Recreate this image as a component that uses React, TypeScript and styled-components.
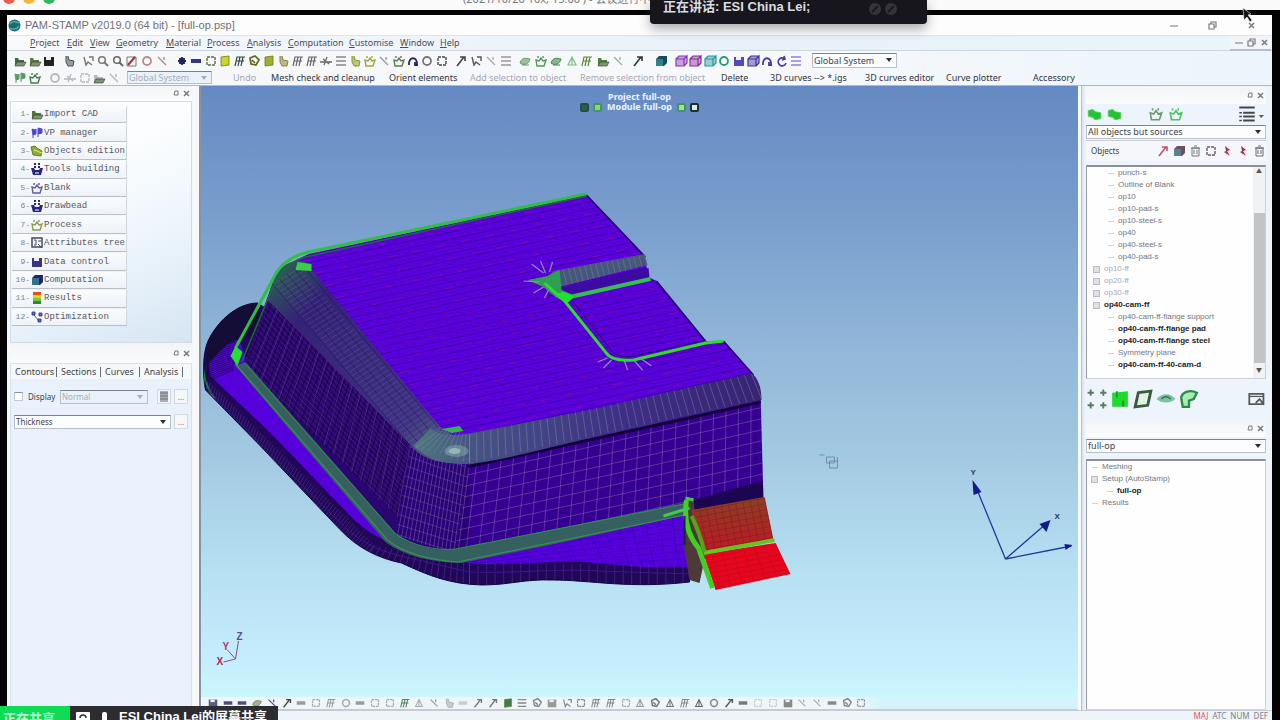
import React from "react";
import styled, { createGlobalStyle } from "styled-components";

const GlobalStyle = createGlobalStyle`
  *, *::before, *::after { box-sizing: border-box; }
  body { margin: 0; background: #000; font-family: "Noto Sans", "Noto Sans CJK SC", sans-serif; font-size: 9px; line-height: 12px; color: #3c3f46; }
  ul, ol { list-style: none; margin: 0; padding: 0; }
  button, select, input { font: inherit; color: inherit; margin: 0; }
`;

/* ---------- frame ---------- */
const Screen = styled.div`
  position: relative; display: flex; flex-direction: column;
  min-height: 100vh; background: #030305; overflow: hidden;
`;
const HostBar = styled.header`
  position: relative; display: flex; height: 10px; flex: none; overflow: hidden;
  background: #fafafa; padding-left: 3px; gap: 8px;
`;
const HostLight = styled.span<{ $c: string }>`
  width: 12px; height: 12px; border-radius: 50%; margin-top: -8px; background: ${(p) => p.$c};
`;
const HostTitle = styled.span`
  margin: -8px 0 0 400px; font-size: 11px; line-height: 14px; color: #77787c; white-space: nowrap;
`;
const AppWindow = styled.div`
  display: flex; flex-direction: column; flex: 1; margin: 5px 8px 0 7px;
  background: #eef5fb;
`;
const TitleBar = styled.div`
  display: flex; align-items: center; height: 20px; padding: 0 14px 0 1px; gap: 4px; background: #fdfdfd;
  font-family: "Liberation Sans", sans-serif; font-size: 11px; color: #6f7178;
`;
const Grow = styled.span`flex: 1;`;
const WindowButtons = styled.div`display: flex; gap: 26px;`;
const GlyphButton = styled.button`
  display: grid; place-items: center; border: 0; padding: 0; background: none; width: 13px; height: 13px; color: #77797f;
`;
const MenuBar = styled.nav`
  display: flex; align-items: center; height: 16px; padding: 0 1px 0 23px; color: #4a4d5a;
  background: linear-gradient(90deg, #f7f9fc, #e6f1f8 60%, #ebf6fb);
  border-bottom: 1px solid #cfd5de; border-top: 1px solid #dde4ee;
`;
const MenuItem = styled.button<{ $w: number }>`
  width: ${(p) => p.$w}px; border: 0; padding: 0; background: none; text-align: left; white-space: nowrap;
  &::first-letter { text-decoration: underline; }
`;
const MdiButtons = styled.div`
  display: flex; align-items: center; height: 15px; padding-left: 2px; border-bottom: 2px solid #b6bcc8; background: #f2f6fa; color: #34363c;
`;
const Toolbar = styled.div`
  display: flex; align-items: center; height: 19px; padding-left: 6px;
  background: linear-gradient(90deg, #f5f7f9, #f7f8fb 60%, #ebf5fb);
`;
const CommandBar = styled(Toolbar)`
  height: 16px; border-bottom: 1px solid #aeb9c9;
`;
const IconGroup = styled.div<{ $w?: number; $ml?: number }>`
  display: flex; align-items: center; justify-content: space-between; flex: none;
  width: ${(p) => (p.$w ? `${p.$w}px` : "auto")}; margin-left: ${(p) => p.$ml ?? 0}px;
`;
const IconButton = styled.button<{ $size?: number }>`
  display: block; flex: none; border: 0; padding: 0; background: none;
  width: ${(p) => p.$size ?? 14}px; height: ${(p) => p.$size ?? 14}px;
  svg { display: block; width: 100%; height: 100%; }
`;
const Command = styled.button<{ $w: number }>`
  width: ${(p) => p.$w}px; flex: none; border: 0; padding: 0; background: none; text-align: left; white-space: nowrap; color: #32353c;
  &:disabled { color: #a4a8af; }
`;
const SelectBox = styled.span<{ $w?: number; $h?: number; $muted?: boolean }>`
  position: relative; display: block; flex: ${(p) => (p.$w ? "none" : "1")};
  width: ${(p) => (p.$w ? `${p.$w}px` : "auto")}; height: ${(p) => p.$h ?? 14}px;
  border: 1px solid #b9bec8; border-top-color: #7e828c; background: ${(p) => (p.$muted ? "#e9f1fa" : "#fcfdfe")};
  color: ${(p) => (p.$muted ? "#8d929c" : "#40434a")};
  &::after {
    content: ""; position: absolute; right: 4px; top: 4px;
    border: 3px solid transparent; border-top: 4px solid ${(p) => (p.$muted ? "#a9aeb6" : "#2a2c31")}; border-bottom: 0; pointer-events: none;
  }
  select {
    display: block; width: 100%; height: 100%; appearance: none; border: 0; padding: 0 10px 0 1px;
    background: none; outline: 0; line-height: 12px;
  }
`;

/* ---------- docks ---------- */
const Body = styled.main`display: flex; flex: 1; min-height: 0;`;
const LeftDock = styled.aside`
  display: flex; flex-direction: column; width: 194px; flex: none; padding: 0 7px 0 3px;
  background: #f6f8fa; border-right: 2px solid #8794a8;
`;
const DockHead = styled.div<{ $h?: number }>`
  display: flex; justify-content: flex-end; align-items: center; gap: 1px; height: ${(p) => p.$h ?? 15}px; flex: none; color: #6a6d76;
  background: linear-gradient(#f2f4f7, #fbfcfd); padding-right: 1px;
  button { width: 9px; height: 9px; }
`;
const StepPanel = styled.section`
  height: 242px; flex: none; padding: 4px 0 0 1px; border: 1px solid #d3dae3;
  background: linear-gradient(155deg, #fbfdfe 30%, #eef6fc 60%, #d6e5f3);
`;
const StepList = styled.ol`
  display: grid; grid-auto-rows: 1fr; width: 115px; height: 221px;
`;
const StepItem = styled.li`display: flex; border-bottom: 1px solid #b9c0cc; border-right: 1px solid #cfd5de; background: linear-gradient(#fafcfe, #eef2f7); margin-bottom: 1px;`;
const StepButton = styled.button`
  display: flex; align-items: center; width: 100%; border: 0; padding: 0; background: none; white-space: nowrap;
  font-family: "Liberation Mono", monospace; color: #555963;
`;
const StepNumber = styled.span`width: 18px; flex: none; text-align: right; font-size: 8px; color: #7d828c;`;
const ContourPanel = styled.section`
  flex: 1; padding: 0 3px; border: 1px solid #dbe1e9; border-bottom: 0; background: #e9f2fc;
`;
const TabRow = styled.div`display: flex; align-items: center; height: 15px; background: #f6f9fc; margin: 0 -3px;`;
const Tab = styled.button<{ $w: number }>`
  width: ${(p) => p.$w}px; margin-right: 4px; border: 0; border-right: 1px solid #666a73; padding: 0; background: none;
  line-height: 10px; text-align: left; white-space: nowrap; &:first-child { margin-left: 4px; }
`;
const FieldRow = styled.div`
  display: flex; align-items: center; gap: 3px; margin-top: 10px; font-size: 8px;
  label { display: flex; align-items: center; gap: 5px; width: 43px; }
  input { appearance: none; width: 9px; height: 9px; border: 1px solid #c3c8d0; border-top-color: #8b8f99; background: #fff; }
`;
const SmallButton = styled.button`
  width: 14px; height: 15px; padding: 0; border: 1px solid #d3d8df; background: #f4f6f9; color: #70747d; font-size: 8px; line-height: 8px;
  svg { display: block; margin: 0 auto; }
`;
const RightDock = styled.aside`
  display: flex; flex-direction: column; width: 194px; flex: none; padding: 0 6px 0 5px;
  border-left: 3px solid #f8fafc; background: linear-gradient(90deg, #dfe6ee 2px, #eef4fb 4px); box-shadow: inset 1px 0 #b6c1ce;
`;
const DockRow = styled.div<{ $h: number }>`display: flex; align-items: center; height: ${(p) => p.$h}px; flex: none;`;
const ObjectsBar = styled(DockRow)`border-top: 1px solid #c9cfd9; background: #f5f7fb; padding-left: 5px; font-size: 8px;`;
const TreeFrame = styled.section<{ $h?: number }>`
  display: flex; flex: ${(p) => (p.$h ? "none" : "1")}; height: ${(p) => (p.$h ? `${p.$h}px` : "auto")};
  border: 1px solid #cdd2da; border-top: 2px solid #8c909a; border-left-color: #969ba5; background: #fefefe;
`;
const Tree = styled.ul<{ $h: number }>`
  display: grid; grid-auto-rows: 1fr; flex: 1; height: ${(p) => p.$h}px;
  font-family: "Liberation Sans", sans-serif; font-size: 8px;
`;
const TreeItem = styled.li<{ $x: number; $bold?: boolean; $dim?: boolean }>`
  display: flex; align-items: center; gap: 4px; padding-left: ${(p) => p.$x}px; white-space: nowrap;
  font-weight: ${(p) => (p.$bold ? 700 : 400)}; color: ${(p) => (p.$bold ? "#202226" : p.$dim ? "#a3a9bd" : "#73767d")};
`;
const Expander = styled.i`width: 7px; height: 7px; border: 1px solid #b9bcc4; background: #e1e2e8;`;
const Leaf = styled.i`width: 6px; height: 1px; background: #d0d3da;`;
const ScrollTrack = styled.div`
  display: flex; flex-direction: column; align-items: center; width: 12px; background: #f1f2f4; font-size: 6px; line-height: 8px; color: #555;
`;
const ScrollThumb = styled.div`width: 11px; height: 150px; margin-top: 38px; margin-bottom: 3px; background: #c3c4c6;`;

/* ---------- viewport ---------- */
const Center = styled.section`
  position: relative; display: flex; flex-direction: column; flex: 1; min-width: 0;
  background: linear-gradient(#6589c2 0%, #789dcc 20%, #8db2d7 38%, #a3cae2 60%, #b7e0f3 78%, #c5edfd 92%, #cdfaff 100%);
  svg.model { display: block; width: 100%; flex: 1 1 0; min-height: 0; }
`;
const SceneLabel = styled.div`
  position: absolute; top: 6px; left: 0; right: 0; display: flex; justify-content: center; align-items: flex-end; gap: 5px;
  font-size: 9px; line-height: 10px; font-weight: 700; color: #e9f6ff; text-align: center;
`;
const SceneIcons = styled.span`display: flex; gap: 4px;`;
const SceneChip = styled.i<{ $c: string; $edge: string }>`
  width: 9px; height: 9px; border-radius: 2px; border: 2px solid ${(p) => p.$edge}; background: ${(p) => p.$c};
`;
const BottomTools = styled.div`
  display: flex; align-items: center; justify-content: space-between; height: 12px; flex: none; width: 76%; padding-left: 6px;
`;
const BottomStrip = styled.div`border-bottom: 1px solid #c3cad4; background: linear-gradient(90deg, #f0f5f8 74%, #d3f4fb 78%);`;
const StatusBar = styled.footer`
  display: flex; justify-content: flex-end; gap: 4px; height: 10px; flex: none; padding-right: 4px; overflow: hidden;
  background: #eff4f8; border-top: 1px solid #c6ccd6; font-size: 8px; line-height: 10px; color: #7d8189;
  b { font-weight: 400; color: #d9546b; }
`;

/* ---------- meeting overlays ---------- */
const Speaking = styled.div`
  position: absolute; left: 650px; top: 0; width: 277px; height: 24px; padding-left: 13px; display: flex; gap: 53px;
  border-radius: 0 0 4px 4px; background: #17161c; box-shadow: 0 5px 12px rgba(40, 50, 60, .4);
  color: #dcdce0; font: 700 13px/14px "Liberation Sans", "Noto Sans CJK SC", sans-serif; white-space: nowrap;
`;
const Sharing = styled.div`
  position: absolute; left: 0; bottom: 0; width: 278px; height: 14px; display: flex; overflow: hidden;
  background: #2d2c30; color: #fff; font: 700 13px/22px "Liberation Sans", "Noto Sans CJK SC", sans-serif; white-space: nowrap;
`;
const SharingTag = styled.span`width: 70px; padding-left: 3px; background: #0fdc55; color: #c8ffd9; line-height: 25px; overflow: hidden;`;
const SharingIcons = styled.svg`width: 49px; height: 14px; flex: none;`;
const Pointer = styled.svg`position: absolute; right: 28px; top: 4px; width: 12px; height: 20px;`;

/* ---------- icon drawings on a 14 x 14 grid ---------- */
type Draw = (c: string) => React.ReactNode;
const glyphs: Record<string, Draw> = {
  open: (c) => <><path d="M2 11V4h3l1 2h5v5z" fill={c} /><path d="M4 8h9l-2 4H2z" fill="#7c9670" stroke="#333" strokeWidth=".6" /></>,
  save: (c) => <><path d="M2 3h10v9H2z" fill={c} /><path d="M4 3h5v3H4z" fill="#eee" /></>,
  hand: (c) => <path d="M4 2v6l2 4h5l1-5-5-1-1-4" fill={c} fillOpacity=".55" stroke={c} />,
  cursor: (c) => <path d="M3 3l2 8 2-3 4 3M8 3h4v4" fill="none" stroke={c} strokeWidth="1.4" />,
  lens: (c) => <><circle cx="6" cy="6" r="3.3" fill="none" stroke={c} strokeWidth="1.5" /><path d="M8 8l4 4" stroke={c} strokeWidth="2" /></>,
  cross: (c) => <><path d="M2 3h9v9H2z" fill="none" stroke="#777" /><path d="M3 11l7-8" stroke={c} strokeWidth="2" /></>,
  ring: (c) => <circle cx="7" cy="7" r="4" fill="none" stroke={c} strokeWidth="1.8" />,
  slash: (c) => <path d="M3 3l8 8M9 3v3" stroke={c} strokeWidth="1.4" />,
  plus: (c) => <path d="M7 3v8M3 7h8M5 5h4v4H5z" stroke={c} strokeWidth="1.8" fill={c} />,
  minus: (c) => <path d="M2 5h10v4H2z" fill={c} />,
  box: (c) => <path d="M3 3h8v8H3z" fill="none" stroke={c} strokeWidth="1.4" strokeDasharray="3 1" />,
  fill: (c) => <path d="M3 3l8-1v9l-8 1z" fill={c} stroke="#6b7a22" strokeWidth=".8" />,
  folder: (c) => <><path d="M1 3l4-1 2 2 5 3-1 5-8-1z" fill={c} stroke="#4c6a22" strokeWidth=".8" /><path d="M4 6l8 3" stroke="#e0eb9a" /></>,
  sheet: (c) => <><path d="M2 3l10-1v10L2 12z" fill={c} /><path d="M5 2v4M9 8v4" stroke="#1a9a2c" strokeWidth="1.200" /></>,
  loop: (c) => <path d="M4 3l8-1-2 9-8 1z" fill="#dff3e0" stroke={c} strokeWidth="1.800" />,
  part: (c) => <path d="M2 6c1-4 6-5 10-3l-2 4-3 1v4H3z" fill="#a8ecb4" stroke={c} strokeWidth="1.500" />,
  poly: (c) => <path d="M3 4l5-2 4 4-3 5-5-1zM5 6l3 3" fill="none" stroke={c} strokeWidth="1.7" />,
  mesh: (c) => <path d="M2 12l2-9h8M5 12l2-9M8 12l2-9M3 7h8" fill="none" stroke={c} strokeWidth="1.2" />,
  node: (c) => <path d="M1 8h12M8 3l-3 8M4 5l6 5" fill="none" stroke={c} strokeWidth="1.3" />,
  undo: (c) => <path d="M3 11c-1-9 9-9 8 0M9 8v3h3" fill="none" stroke={c} strokeWidth="1.8" />,
  redo: (c) => <path d="M9 2l1 3-3 1M10 5a4 4 0 1 0 1 4" fill="none" stroke={c} strokeWidth="1.6" />,
  tri: (c) => <path d="M7 3l4 8H3zM7 5v6" fill="none" stroke={c} strokeWidth="1.2" />,
  leaf: (c) => <path d="M2 9c2-6 6-5 10-4-1 5-6 7-10 4zM4 11h7" fill={c} fillOpacity=".6" stroke={c} />,
  disc: (c) => <><path d="M1 7c3-4 9-4 12 0-3 3-9 3-12 0z" fill={c} fillOpacity=".7" /><path d="M4 7c2-2 4-2 6 0" stroke="#2c7c58" fill="none" /></>,
  cube: (c) => <><path d="M2 5l3-3h8v7l-3 3H2z" fill={c} fillOpacity=".45" /><path d="M2 5h8v7H2zM10 5l3-3v7l-3 3M2 5l3-3h8" fill="none" stroke={c} strokeWidth="1.2" /></>,
  solid: (c) => <><path d="M2 5l3-3h8v7l-3 3H2z" fill={c} /><path d="M2 5h7v7H2z" fill="#42b8bf" fillOpacity=".5" /></>,
  lines: (c) => <path d="M2 3h10M2 7h10M2 11h10" stroke={c} strokeWidth="1.6" />,
  list: (c) => <><path d="M1 2h12M4 6h9M4 9h9M4 12h9" stroke={c} strokeWidth="1.600" /><path d="M1 6h2M1 9h2M1 12h2" stroke={c} strokeWidth="1.200" /></>,
  paw: (c) => <><path d="M1 6h3l1 2h4l1-2h3l-2 7H3z" fill={c} /><path d="M4 5h2M8 5h2M4 2h2M8 2h2" stroke={c} strokeWidth="2" /><path d="M5 11h4" stroke="#fff" /></>,
  flags: (c) => <path d="M2 3l3 1 1-1v5L3 9zM8 2l4 1v4L8 8zM3 9v3M8 8v3" fill={c} stroke={c} />,
  blob: (c) => <path d="M2 4l4-1 2 2 5 1v5l-5 1-2-2-4-1z" fill={c} stroke="#58c95e" strokeWidth=".8" />,
  tree: (c) => <><path d="M2 2h10v9H2z" fill="#f5f6f8" stroke={c} strokeWidth="1.5" /><path d="M4 4h2v5H4M8 5h3M8 8l4 4" stroke={c} fill="none" /></>,
  win: (c) => <><path d="M1 3h11v8H1z" fill="#f5f6f8" stroke={c} strokeWidth="1.400" /><path d="M1 5h11" stroke={c} /><path d="M6 10l3-3 3 4" stroke={c} fill="none" strokeWidth="1.400" /></>,
  rainbow: () => <><path d="M3 1h8v3H3z" fill="#df512c" /><path d="M3 4h8v3H3z" fill="#e9cf28" /><path d="M3 7h8v3H3z" fill="#77c92d" /><path d="M3 10h8v3H3z" fill="#238a4d" /></>,
  dots: (c) => <path d="M2 2h3v3H2zM9 3h3v3H9zM8 9h3v3H8zM4 5l5 6" fill={c} stroke="#2c2a88" strokeWidth=".8" />,
  corners: (c) => <path d="M1 3h4M3 1v4M9 3h4M11 1v4M1 11h4M3 9v4M9 11h4M11 9v4" stroke={c} strokeWidth="1.200" />,
  pot: (c) => <path d="M2 6l1 6h7l2-6-3 1-2-3-2 3zM4 2v2M9 2v2" fill="none" stroke={c} strokeWidth="1.4" />,
  arrow: (c) => <path d="M3 12L10 3M6 3h5v4" stroke={c} fill="none" strokeWidth="1.6" />,
  bin: (c) => <path d="M4 4h7v8H4zM3 4h9M6 2h3M6 6v4M9 6v4" stroke={c} fill="none" />,
  bolt: (c) => <path d="M5 2l5 4-3 1 3 5-6-4 2-1z" fill={c} />,
};
const Glyph = ({ spec }: { spec: string }) => {
  const [name, color = "#555"] = spec.split(" ");
  return <svg viewBox="0 0 14 14" aria-hidden="true">{glyphs[name](color)}</svg>;
};
const Icons = ({ list, w, ml, size }: { list: string; w?: number; ml?: number; size?: number }) => (
  <IconGroup $w={w} $ml={ml}>
    {list.split(",").map((s, i) => (
      <IconButton key={i} $size={size} type="button" aria-label={s.split(" ")[0]}><Glyph spec={s} /></IconButton>
    ))}
  </IconGroup>
);

const Pick = ({ label, value, ...rest }: { label: string; value: string; $w?: number; $h?: number; $muted?: boolean }) => (
  <SelectBox {...rest}>
    <select aria-label={label} disabled={rest.$muted}><option>{value}</option></select>
  </SelectBox>
);

const CloseGlyph = () => <svg width="7" height="7" viewBox="0 0 7 7"><path d="M1 1l5 5M6 1L1 6" stroke="currentColor" strokeWidth="1.500" /></svg>;
const RestoreGlyph = () => <svg width="9" height="9" viewBox="0 0 9 9"><path d="M1 3h5v5H1zM3 3V1h5v5H6" stroke="currentColor" strokeWidth="1.200" fill="none" /></svg>;
const MinGlyph = () => <svg width="8" height="7" viewBox="0 0 8 7"><path d="M0 4h8" stroke="currentColor" /></svg>;
const PinGlyph = () => <svg width="7" height="7" viewBox="0 0 7 7"><path d="M1 5h4V1H2z" stroke="currentColor" fill="none" /></svg>;

const Head = ({ h }: { h?: number }) => (
  <DockHead $h={h}>
    <GlyphButton type="button" aria-label="Float"><PinGlyph /></GlyphButton>
    <GlyphButton type="button" aria-label="Close"><CloseGlyph /></GlyphButton>
  </DockHead>
);

/* ---------- data ---------- */
const menus: [string, number][] = [
  ["Project", 37], ["Edit", 23], ["View", 26], ["Geometry", 50], ["Material", 41], ["Process", 40],
  ["Analysis", 41], ["Computation", 61], ["Customise", 51], ["Window", 40], ["Help", 24],
];
const commands: [string, number, boolean][] = [
  ["Undo", 38, true], ["Mesh check and cleanup", 118, false], ["Orient elements", 81, false],
  ["Add selection to object", 110, true], ["Remove selection from object", 141, true], ["Delete", 49, false],
  ["3D curves --> *.igs", 95, false], ["3D curves editor", 81, false], ["Curve plotter", 87, false], ["Accessory", 46, false],
];
const steps: [string, string][] = [
  ["Import CAD", "open #4b7a2e"], ["VP manager", "flags #4c46dc"], ["Objects edition", "folder #8fae2b"],
  ["Tools building", "paw #27257c"], ["Blank", "pot #5c5a9c"], ["Drawbead", "paw #27257c"], ["Process", "pot #8c9a52"],
  ["Attributes tree", "tree #474a58"], ["Data control", "save #35348c"], ["Computation", "solid #26265e"],
  ["Results", "rainbow"], ["Optimization", "dots #3f7fd0"],
];
type Node = [string, "leaf" | "dim" | "root", boolean?];
const objects: Node[] = [
  ["punch-s", "leaf"], ["Outline of Blank", "leaf"], ["op10", "leaf"], ["op10-pad-s", "leaf"], ["op10-steel-s", "leaf"],
  ["op40", "leaf"], ["op40-steel-s", "leaf"], ["op40-pad-s", "leaf"], ["op10-ff", "dim"], ["op20-ff", "dim"], ["op30-ff", "dim"],
  ["op40-cam-ff", "root", true], ["op40-cam-ff-flange support", "leaf"], ["op40-cam-ff-flange pad", "leaf", true],
  ["op40-cam-ff-flange steel", "leaf", true], ["Symmetry plane", "leaf"], ["op40-cam-ff-40-cam-d", "leaf", true],
];
const bottomIcons =
  "save #555d86,minus #4a4e7c,minus #4a4e7c,leaf #6d8a55,slash #4c43b2,arrow #444,minus #999,box #aaa,mesh #999,ring #aaa,minus #999,box #aaa,box #aaa,mesh #4b8a57,tri #aaa,slash #999,hand #aaa,minus #ccc,arrow #777,arrow #777,fill #3d7f52,lines #888,poly #888,save #999,cursor #888,box #888,mesh #888,mesh #888,box #aaa,tri #999,poly #777,tri #777,mesh #888,tri #666,ring #888,arrow #555,minus #777,box #ccc,box #ccc,save #888,slash #aaa,slash #aaa,minus #888,poly #888,box #999";

/* ---------- formed part ---------- */
type P = [number, number];
const mix = (a: P, b: P, t: number): P => [a[0] + (b[0] - a[0]) * t, a[1] + (b[1] - a[1]) * t];
const pt = (p: P) => `${p[0].toFixed(1)} ${p[1].toFixed(1)}`;
/** Straight mesh lines joining two edges, n of them evenly spread. */
const rule = (a: P, b: P, c: P, d: P, n: number) =>
  Array.from({ length: n + 1 }, (_, i) => `M${pt(mix(a, b, i / n))}L${pt(mix(c, d, i / n))}`).join("");

const flange = "M258 303C240 303 220 318 209 340C203 352 203 376 206 390L258 443L340 529C358 548 378 558 402 563C430 576 450 584 482 585C510 585 524 579 553 580C590 580 630 589 690 582L692 505L300 330Z";
const leftWall = "M272 286L245 362L396 536L443 552L466 462L412 444L300 300Z";
const frontWall = "M412 440C425 460 445 465 467 463L761 392L764 502L690 512L455 552C430 552 410 546 396 534Z";
const topFace = "M293 262L309 254L587 195L645 256L649 277L657 281L706 341L724 341L754 375L600 414L467 436L431 428L300 286Z";
const leftFillet = "M273 282C278 268 290 258 306 262L440 426L466 445V463C440 465 420 458 410 444L268 300Z";
const frontFillet = "M431 428C440 436 452 436 467 434L600 408L752 373C758 378 762 386 762 400L600 436C540 449 500 462 467 464C440 464 425 456 414 446Z";

const Model = () => (
  <svg className="model" viewBox="202 86 876 611" preserveAspectRatio="xMidYMid meet" role="img" aria-label="Formed part mesh">
    <defs>
      <clipPath id="flange"><path d={flange} /></clipPath>
      <clipPath id="left"><path d={leftWall} /></clipPath>
      <clipPath id="front"><path d={frontWall} /></clipPath>
      <clipPath id="top"><path d={topFace} /></clipPath>
      <linearGradient id="filletL" x1="0" y1="0" x2="1" y2="1">
        <stop offset="0" stopColor="#2c6a50" /><stop offset=".22" stopColor="#352278" /><stop offset=".75" stopColor="#3f3284" /><stop offset="1" stopColor="#57717f" />
      </linearGradient>
      <linearGradient id="filletF" x1="0" x2="1">
        <stop offset="0" stopColor="#4f7a7c" /><stop offset=".15" stopColor="#475683" /><stop offset=".6" stopColor="#3e2f86" /><stop offset="1" stopColor="#382374" />
      </linearGradient>
      <linearGradient id="redTop" x1="0" y1="0" x2="0" y2="1"><stop offset="0" stopColor="#8a4026" /><stop offset="1" stopColor="#c01824" /></linearGradient>
    </defs>

    <path d={flange} fill="#22065a" stroke="#12043a" />
    <g clipPath="url(#flange)">
      <path d="M232 318C212 334 206 356 211 376L270 432L350 515C372 538 396 549 462 562C500 568 540 560 586 562C630 566 655 569 692 567V505L250 370Z" fill="#5600dc" />
      <path d="M258 303C240 303 220 318 209 340L206 366L228 344L262 330Z" fill="#140d35" />
      <path d={rule([206, 378], [375, 545], [203, 394], [360, 562], 70) + rule([375, 545], [470, 564], [365, 562], [470, 590], 16) + rule([470, 562], [692, 566], [470, 590], [692, 590], 26)} stroke="#8f86a8" strokeOpacity=".35" strokeWidth=".7" />
      <path d="M206 340C200 362 204 385 215 398" fill="none" stroke="#1d7a3e" strokeWidth="2" />
      <path d={rule([209, 350], [206, 382], [236, 342], [234, 370], 14)} stroke="#140d35" strokeOpacity=".7" strokeWidth="1" />
      <path d={rule([470, 560], [686, 512], [500, 570], [692, 575], 16) + rule([460, 556], [460, 575], [690, 506], [690, 566], 8)} stroke="#24068a" strokeOpacity=".55" strokeWidth=".7" />
      <path d="M207 388L258 441L345 527C365 545 385 553 410 558L470 572C510 574 560 568 600 571L692 574" fill="none" stroke="#3a1a80" strokeWidth="1" />
    </g>

    <path d={leftWall} fill="#2c0670" />
    <g clipPath="url(#left)">
      <path d={rule([272, 290], [466, 462], [240, 365], [440, 556], 46)} stroke="#140038" strokeWidth="1" />
      <path d={rule([272, 286], [245, 362], [420, 452], [440, 556], 16)} stroke="#7466ac" strokeOpacity=".35" strokeWidth=".8" />
      <path d={rule([290, 280], [466, 452], [252, 372], [452, 572], 22)} stroke="#a79ccb" strokeOpacity=".25" strokeWidth=".8" />
    </g>

    <path d={frontWall} fill="#350092" />
    <g clipPath="url(#front)">
      <path d="M396 430H470V556H396Z" fill="#1d0458" fillOpacity=".45" />
      <path d={rule([412, 440], [470, 462], [394, 534], [458, 556], 16) + rule([478, 455], [764, 390], [466, 556], [764, 495], 23)} stroke="#a095bd" strokeOpacity=".45" strokeWidth=".8" />
      <path d={rule([470, 464], [455, 552], [764, 396], [764, 485], 8)} stroke="#a98fb4" strokeOpacity=".45" strokeWidth=".8" />
      <path d={rule([408, 446], [396, 534], [470, 468], [455, 552], 9)} stroke="#8c80b0" strokeOpacity=".4" strokeWidth=".8" />
      <path d="M467 467L762 402" stroke="#12003c" strokeWidth="3" />
      <path d="M690 501L766 480V502L690 514Z" fill="#1c0652" />
    </g>

    <path d="M236 366L246 362L396 533C412 546 436 552 456 549L690 502V514L560 543L462 563C430 562 405 556 386 542Z" fill="#35605f" />
    <path d="M236 364L388 540C405 554 432 560 458 562L690 514" fill="none" stroke="#379450" strokeWidth="1.200" />
    <path d="M246 364L396 534C414 546 436 551 456 549L690 503" fill="none" stroke="#2f8f50" strokeWidth="1" />

    <path d={topFace} fill="#5a00da" />
    <g clipPath="url(#top)">
      <path d={rule([280, 262], [440, 448], [640, 184], [800, 370], 31)} stroke="#2b0490" strokeOpacity=".65" strokeWidth="1" />
      <path d={rule([300, 254], [590, 190], [470, 450], [770, 380], 34)} stroke="#7c1fb8" strokeOpacity=".5" strokeWidth=".7" strokeDasharray="5 9" />
      <path d={rule([280, 266], [440, 452], [640, 188], [800, 374], 15)} stroke="#a01f78" strokeOpacity=".55" strokeWidth=".8" strokeDasharray="9 16" />
    </g>
    <path d="M587 195L646 257M657 281L706 341M724 341L754 375" stroke="#25066b" strokeWidth="1.500" fill="none" />

    <path d={leftFillet} fill="url(#filletL)" />
    <path d={rule([274, 284], [412, 446], [300, 268], [440, 428], 44)} stroke="#8a9aa6" strokeOpacity=".28" strokeWidth=".8" />
    <path d={rule([273, 284], [302, 264], [411, 446], [438, 427], 4)} stroke="#170440" strokeOpacity=".5" strokeWidth=".8" />
    <path d={frontFillet} fill="url(#filletF)" />
    <path d={rule([470, 435], [752, 374], [470, 463], [762, 399], 40)} stroke="#a3b2b8" strokeOpacity=".35" strokeWidth=".9" />
    <path d={rule([440, 430], [470, 434], [416, 448], [470, 463], 9)} stroke="#87aab0" strokeOpacity=".4" strokeWidth=".8" />
    <ellipse cx="457" cy="451" rx="12" ry="6" fill="#8fb8ac" fillOpacity=".45" />
    <ellipse cx="455" cy="451" rx="6" ry="3" fill="#b4d3c6" fillOpacity=".6" />
    <path d="M442 429l18-3 4 5-12 2z" fill="#32b84a" />

    <path d="M587 194L309 252C290 256 279 266 273 280L236 348" fill="none" stroke="#2fbf45" strokeWidth="3" />
    <path d="M587 196L306 257C288 262 278 274 268 300L242 362" fill="none" stroke="#1d6b3c" strokeWidth="1.500" />
    <path d="M236 346L231 356L238 366L243 352Z" fill="#27e02f" />
    <path d="M298 262L312 264L312 271L296 270Z" fill="#3ad046" />

    <path d="M554 271L645 254L648 265L560 287L545 280Z" fill="#47577c" />
    <path d={rule([558, 270], [645, 255], [562, 286], [648, 266], 16)} stroke="#8ea2ac" strokeOpacity=".4" strokeWidth=".8" />
    <path d="M562 288L649 268L650 277L568 296Z" fill="#3c0ba0" />
    <path d="M566 298L651 279" stroke="#38bd52" strokeWidth="4" fill="none" />
    <path d="M528 280L548 276L560 270L562 290L576 296L568 303L556 297L544 287Z" fill="#2f9f54" />
    <path d="M545 283L566 302L606 352C611 360 622 361 634 360L706 343L724 341" fill="none" stroke="#31dc2e" strokeWidth="3" />
    <path d="M556 294L568 303L575 296L564 292Z" fill="#1fe52a" />
    <path d="M572 300L614 353C622 358 630 357 640 355L706 340" fill="none" stroke="#26066b" strokeWidth="1" />
    <path d="M532 264l12 9M541 261l5 12M553 262l-3 10M524 281l16 1M534 293l10-6M545 298l4-8M598 362l10-4M604 368l8-8M628 370l-3-9M643 370l-8-9M652 366l-10-7" stroke="#8c8fbc" strokeWidth="1.200" />

    <path d="M684 505L694 497L696 520L706 555L700 583L690 580L684 545Z" fill="#4d3a38" />
    <path d="M692 510L765 497L774 540L704 552Z" fill="url(#redTop)" />
    <path d={rule([695, 512], [705, 550], [765, 498], [773, 538], 7) + rule([700, 510], [765, 498], [708, 550], [773, 538], 9)} stroke="#6d1a1c" strokeOpacity=".5" strokeWidth=".8" />
    <path d="M704 554L776 543L791 574L716 590Z" fill="#e6061e" />
    <path d={rule([706, 558], [716, 588], [777, 545], [790, 574], 6) + rule([712, 554], [776, 543], [720, 589], [789, 574], 6)} stroke="#a30b1c" strokeOpacity=".45" strokeWidth=".7" />
    <path d="M704 553L775 540" stroke="#62c71e" strokeWidth="4" />
    <path d="M687 500C684 520 688 535 699 548L713 588" fill="none" stroke="#3fd021" strokeWidth="5" />
    <path d="M692 516C698 528 702 540 705 552" fill="none" stroke="#5ca01e" strokeWidth="4" />
    <path d="M664 516L690 508M686 498L694 500" stroke="#45c84e" strokeWidth="3" />
    <path d="M685 516V545" stroke="#132b2e" strokeWidth="2" />

    {/* work plane axes */}
    <g stroke="#1c3a9a" strokeWidth="1.300" fill="#121a8c">
      <path d="M1006 559L976 486M1006 559L1044 526M1006 559L1072 546" fill="none" />
      <path d="M973 480L982 492L974 495ZM1051 520L1047 532L1040 524ZM1073 545L1066 550L1065 544Z" stroke="none" />
    </g>
    <g fontFamily="Liberation Sans, sans-serif" fontSize="8" fontWeight="700" fill="#25357c">
      <text x="971" y="475">Y</text><text x="1055" y="519">X</text>
    </g>
    <g fontFamily="Liberation Sans, sans-serif" fontSize="10" fontWeight="700">
      <text x="237" y="640" fill="#5c4d92">Z</text><text x="223" y="650" fill="#b4365c">Y</text><text x="217" y="665" fill="#b8234a">X</text>
    </g>
    <path d="M239 641L236 659L224 662M236 659L228 650" stroke="#8a4f7c" fill="none" />
    <path d="M827 457h8v6h-8zM830 461h8v7h-8zM820 455h5M838 457v5" stroke="#67809a" strokeOpacity=".8" fill="none" />
  </svg>
);

export default function App() {
  return (
    <Screen>
      <GlobalStyle />
      <HostBar>
        <HostLight $c="#f05a4e" /><HostLight $c="#f3b73a" /><HostLight $c="#2eb95a" />
        <HostTitle>(2021/10/20 10x, 15:00 ) - 会议进行中</HostTitle>
      </HostBar>

      <AppWindow>
        <TitleBar>
          <svg width="13" height="13" viewBox="0 0 13 13" aria-hidden="true">
            <circle cx="6.500" cy="6.500" r="6" fill="#1c6b74" /><path d="M2 5c3-4 6-2 9-1M2 9c3 2 7 1 9-2" stroke="#43b39b" fill="none" strokeWidth="1.500" />
          </svg>
          <span>PAM-STAMP v2019.0 (64 bit) - [full-op.psp]</span>
          <Grow />
          <WindowButtons>
            <GlyphButton type="button" aria-label="Minimise"><MinGlyph /></GlyphButton>
            <GlyphButton type="button" aria-label="Restore"><RestoreGlyph /></GlyphButton>
            <GlyphButton type="button" aria-label="Close window"><CloseGlyph /></GlyphButton>
          </WindowButtons>
        </TitleBar>

        <MenuBar>
          {menus.map(([name, w]) => <MenuItem key={name} $w={w} type="button">{name}</MenuItem>)}
          <Grow />
          <MdiButtons>
            <GlyphButton type="button" aria-label="Minimise document"><MinGlyph /></GlyphButton>
            <GlyphButton type="button" aria-label="Restore document"><RestoreGlyph /></GlyphButton>
            <GlyphButton type="button" aria-label="Close document"><CloseGlyph /></GlyphButton>
          </MdiButtons>
        </MenuBar>

        <Toolbar>
          <Icons w={43} list="open #3d6b48,open #5d7a45,save #222" />
          <Icons ml={6} list="hand #47505c" />
          <Icons w={88} ml={5} list="cursor #777,lens #777,lens #666,cross #a0343c,ring #b98c8c,slash #b08a90" />
          <Icons w={274} ml={6} list="plus #20245c,minus #33358c,box #5a6a48,fill #c9d62c,mesh #2e4a3c,poly #5b6a18,fill #9fae2c,hand #8a8440,mesh #666,mesh #666,node #666,lines #888,hand #8a9a22,pot #a0a43c,slash #999,pot #5f7a50,undo #26265c,ring #777,box #444" />
          <Icons w={59} ml={5} list="arrow #444,cursor #555,slash #aaa,lines #999" />
          <Icons w={107} ml={5} list="leaf #5aa060,pot #4f9a55,leaf #3f8a48,tri #7ac07e,mesh #5c8a3c,open #4a8a30,slash #aaa" />
          <Icons ml={6} list="arrow #333" />
          <Icons ml={9} list="solid #174d5c" />
          <Icons w={129} ml={6} list="cube #8a38b8,cube #8a2c9c,cube #2a9aa0,ring #2c9a70,save #5048c4,cube #3c34a0,undo #4038b0,redo #4038b0,lines #8c84d8" />
          <IconGroup $ml={9}><Pick label="Coordinate system" value="Global System" $w={85} $h={15} /></IconGroup>
        </Toolbar>

        <CommandBar>
          <Icons w={29} list="flags #5a9a68,pot #4d7a52" />
          <Icons w={73} ml={6} list="ring #b5b8be,node #b5b8be,box #b5b8be,open #b5b8be,slash #b5b8be" />
          <IconGroup $ml={6}><Pick label="Reference system" value="Global System" $w={85} $h={13} $muted /></IconGroup>
          <IconGroup $ml={21}>
            {commands.map(([name, w, off]) => <Command key={name} $w={w} disabled={off} type="button">{name}</Command>)}
          </IconGroup>
        </CommandBar>

        <Body>
          <LeftDock>
            <Head />
            <StepPanel>
              <StepList>
                {steps.map(([name, icon], i) => (
                  <StepItem key={name}>
                    <StepButton type="button">
                      <StepNumber>{i + 1}-</StepNumber>
                      <svg width="14" height="14" viewBox="0 0 14 14">{glyphs[icon.split(" ")[0]](icon.split(" ")[1])}</svg>
                      {name}
                    </StepButton>
                  </StepItem>
                ))}
              </StepList>
            </StepPanel>
            <Head h={20} />
            <ContourPanel>
              <TabRow>
                <Tab type="button" $w={42}>Contours</Tab><Tab type="button" $w={40}>Sections</Tab>
                <Tab type="button" $w={35}>Curves</Tab><Tab type="button" $w={39}>Analysis</Tab>
              </TabRow>
              <FieldRow>
                <label><input type="checkbox" />Display</label>
                <Pick label="Display mode" value="Normal" $muted $w={88} />
                <Grow />
                <SmallButton type="button" aria-label="Colour scale">
                  <svg width="10" height="11" viewBox="0 0 10 11"><path d="M1 0h8v11H1z" fill="#a9acb4" /><path d="M1 2h8M1 5h8M1 8h8" stroke="#6f727b" /></svg>
                </SmallButton>
                <SmallButton type="button">...</SmallButton>
              </FieldRow>
              <FieldRow>
                <Pick label="Contour" value="Thickness" /><SmallButton type="button">...</SmallButton>
              </FieldRow>
            </ContourPanel>
          </LeftDock>

          <Center>
            <Model />
            <SceneLabel>
              <SceneIcons><SceneChip $c="#2e5d4e" $edge="#23513f" /><SceneChip $c="#8fd66e" $edge="#3c9a58" /></SceneIcons>
              <span>Project full-op<br />Module full-op</span>
              <SceneIcons><SceneChip $c="#a5e08a" $edge="#3c9a58" /><SceneChip $c="#dfe9e4" $edge="#16342c" /></SceneIcons>
            </SceneLabel>
            <BottomStrip>
              <BottomTools>
                {bottomIcons.split(",").map((s, i) => (
                  <IconButton key={i} $size={12} type="button" aria-label={s.split(" ")[0]}><Glyph spec={s} /></IconButton>
                ))}
              </BottomTools>
            </BottomStrip>
          </Center>

          <RightDock>
            <Head h={18} />
            <DockRow $h={20}>
              <Icons w={36} size={16} list="blob #22c430,blob #22c430" />
              <Icons w={36} ml={26} size={16} list="pot #6a9a6e,pot #4cc25c" />
              <Grow />
              <IconButton $size={18} type="button" aria-label="List"><Glyph spec="list #43464c" /></IconButton>
              <IconButton $size={10} type="button" aria-label="List options">
                <svg viewBox="0 0 10 10"><path d="M3 6h5L5 9z" fill="#555" /></svg>
              </IconButton>
            </DockRow>
            <DockRow $h={16}><Pick label="Object filter" value="All objects but sources" /></DockRow>
            <ObjectsBar $h={21}>
              Objects
              <Grow />
              <Icons w={110} list="arrow #c0506c,solid #6f4c60,bin #777,box #6a5a6a,bolt #b02c44,bolt #b0243c,bin #667" />
            </ObjectsBar>
            <DockRow $h={4} />
            <TreeFrame $h={214}>
              <Tree $h={202}>
                {objects.map(([name, kind, bold]) => (
                  <TreeItem key={name} $x={kind === "leaf" ? 21 : 6} $bold={bold} $dim={kind === "dim"}>
                    {kind === "leaf" ? <Leaf /> : <Expander />}{name}
                  </TreeItem>
                ))}
              </Tree>
              <ScrollTrack>▲<ScrollThumb />▼</ScrollTrack>
            </TreeFrame>
            <DockRow $h={40}>
              <Icons w={114} size={22} list="corners #5c7a62,sheet #1fdb2a,loop #3a5a40,disc #4fae78,part #2a8c40" />
              <Grow />
              <IconButton $size={18} type="button" aria-label="Open panel"><Glyph spec="win #55585f" /></IconButton>
            </DockRow>
            <Head h={18} />
            <DockRow $h={18}><Pick label="Project" value="full-op" /></DockRow>
            <DockRow $h={4} />
            <TreeFrame>
              <Tree $h={48}>
                <TreeItem $x={5}><Leaf />Meshing</TreeItem>
                <TreeItem $x={4}><Expander />Setup (AutoStamp)</TreeItem>
                <TreeItem $x={20} $bold><Leaf />full-op</TreeItem>
                <TreeItem $x={5}><Leaf />Results</TreeItem>
              </Tree>
            </TreeFrame>
          </RightDock>
        </Body>

        <StatusBar><b>MAJ</b><span>ATC</span><span>NUM</span><span>DEF</span></StatusBar>
      </AppWindow>

      <Speaking>
        <span>正在讲话: ESI China Lei;</span>
        <svg width="38" height="18" viewBox="0 0 38 18" aria-hidden="true">
          <circle cx="12" cy="9" r="6" fill="#34343a" /><circle cx="28" cy="9" r="6" fill="#34343a" />
          <path d="M9 12l6-6M25 12l6-6" stroke="#1b1a20" strokeWidth="2" />
        </svg>
      </Speaking>
      <Sharing>
        <SharingTag>正在共享</SharingTag>
        <SharingIcons viewBox="0 0 49 14" aria-hidden="true">
          <rect x="6" y="6" width="14" height="9" rx="1" fill="#fff" /><path d="M10 12a3 3 0 0 1 6 0" stroke="#333" strokeWidth="1.500" fill="none" />
          <rect x="32" y="6" width="5" height="10" rx="2" fill="#fff" />
        </SharingIcons>
        ESI China Lei的屏幕共享
      </Sharing>
      <Pointer viewBox="0 0 12 20" aria-hidden="true"><path d="M3 4l1 12 3-3 3 5 2-2-4-5 3-1z" fill="#141418" stroke="#ddd" strokeWidth=".7" /></Pointer>
    </Screen>
  );
}
